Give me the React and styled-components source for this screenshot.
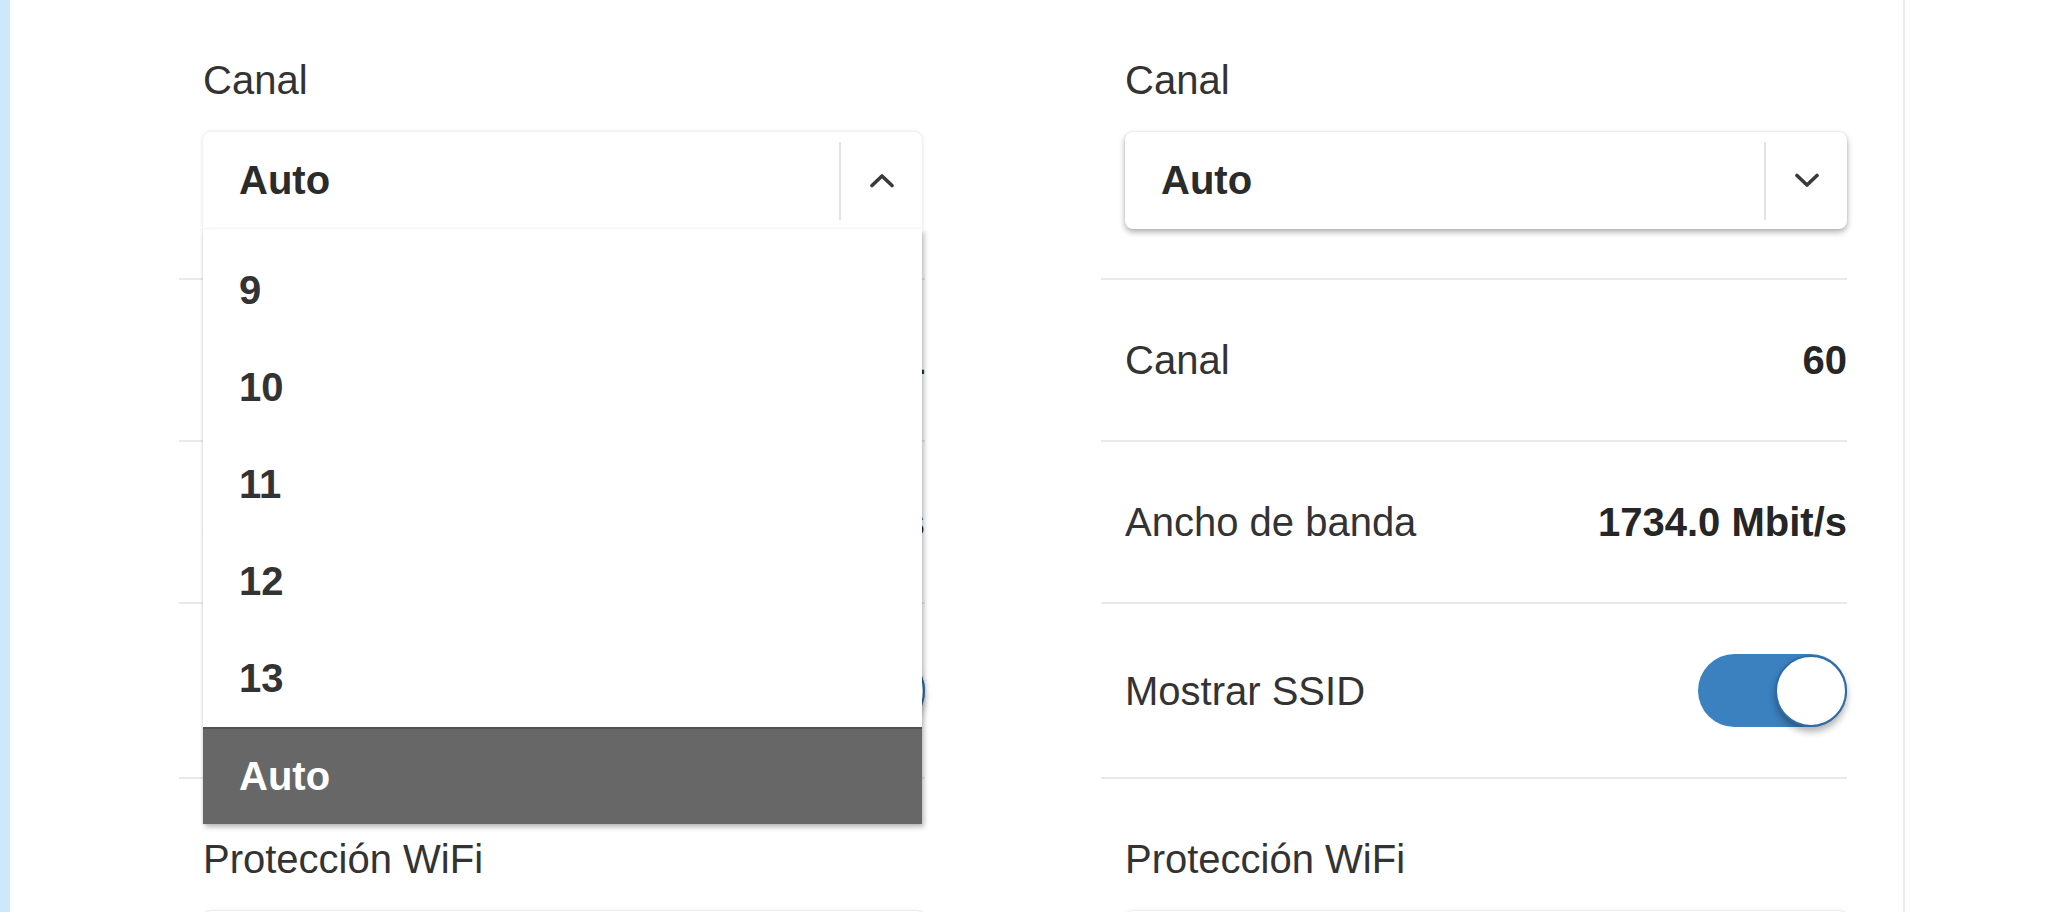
import React from 'react';
import styled, { createGlobalStyle } from 'styled-components';

const GlobalStyle = createGlobalStyle`
    html, body {
        margin: 0;
        padding: 0;
        background: #ffffff;
        font-family: "Liberation Sans", Arial, Helvetica, sans-serif;
        color: #333333;
    }
    * {
        box-sizing: border-box;
    }
`;

const CHANNELS = ['9', '10', '11', '12', '13', 'Auto'];

const BANDS = [
    { open: true, channel: '11', speed: '573.5 Mbit/s' },
    { open: false, channel: '60', speed: '1734.0 Mbit/s' },
];

function Chevron({ up }) {
    return (
        <svg width="26" height="15" viewBox="0 0 26 15">
            <polyline
                points={up ? '3,12.5 13,3 23,12.5' : '3,2.5 13,12 23,2.5'}
                fill="none"
                stroke="#3a3a3a"
                strokeWidth="3.6"
                strokeLinecap="round"
                strokeLinejoin="round"
            />
        </svg>
    );
}

function Dropdown({ value, open, options }) {
    return (
        <DropWrap $open={open}>
            <SelectBox $open={open}>
                <SelectValue>{value}</SelectValue>
                <Arrow>
                    <Chevron up={open} />
                </Arrow>
            </SelectBox>
            {open && (
                <Menu>
                    {options.map(o => (
                        <Option key={o} $active={o === value}>{o}</Option>
                    ))}
                </Menu>
            )}
        </DropWrap>
    );
}

function Band({ open, channel, speed }) {
    return (
        <Column>
            <Group>
                <Label>Canal</Label>
                <Dropdown value="Auto" open={open} options={CHANNELS} />
            </Group>
            <Row>
                <Label>Canal</Label>
                <Value>{channel}</Value>
            </Row>
            <Row>
                <Label>Ancho de banda</Label>
                <Value>{speed}</Value>
            </Row>
            <Row>
                <Label>Mostrar SSID</Label>
                <Toggle>
                    <Knob />
                </Toggle>
            </Row>
            <Group $divided>
                <Label>Protección WiFi</Label>
                <Dropdown value="WPA2-PSK" options={[]} />
            </Group>
        </Column>
    );
}

function App() {
    return (
        <Page>
            <GlobalStyle />
            <Strip />
            <Panel>
                {BANDS.map((b, i) => (
                    <Band key={i} {...b} />
                ))}
            </Panel>
            <Rest />
        </Page>
    );
}

const Page = styled.div`
    display: flex;
    height: 912px;
    overflow: hidden;
    background: #ffffff;
`;

const Strip = styled.div`
    width: 10px;
    flex-shrink: 0;
    background: #cde7fb;
`;

const Panel = styled.div`
    width: 1895px;
    flex-shrink: 0;
    display: grid;
    grid-template-columns: 746px 746px;
    column-gap: 176px;
    align-content: start;
    padding: 0 56px 0 169px;
    border-right: 2px solid #ededed;
`;

const Rest = styled.div`
    flex: 1;
    background: #ffffff;
`;

const Column = styled.div`
    display: flex;
    flex-direction: column;
`;

const Group = styled.div`
    padding: 50px 0 49px 24px;
    border-top: ${p => (p.$divided ? '2px solid #e9e9e9' : 'none')};
`;

const Label = styled.div`
    font-size: 40px;
    line-height: 60px;
    color: #333333;
    margin-bottom: 22px;
`;

const Row = styled.div`
    display: flex;
    align-items: center;
    justify-content: space-between;
    padding: 50px 0 50px 24px;
    border-top: 2px solid #e9e9e9;

    & > ${Label} {
        margin-bottom: 0;
    }
`;

const Value = styled.div`
    font-size: 40px;
    line-height: 60px;
    font-weight: 700;
    color: #262626;
`;

const DropWrap = styled.div`
    position: relative;
    margin-right: ${p => (p.$open ? '3px' : '0')};
`;

const SelectBox = styled.div`
    display: flex;
    align-items: center;
    height: 97px;
    background: #ffffff;
    border-radius: ${p => (p.$open ? '8px 8px 0 0' : '8px')};
    box-shadow: ${p =>
        p.$open
            ? '0 0 4px rgba(0, 0, 0, 0.14)'
            : '0 3px 6px rgba(0, 0, 0, 0.32), 0 0 2px rgba(0, 0, 0, 0.1)'};
`;

const SelectValue = styled.div`
    flex: 1;
    padding-left: 36px;
    font-size: 40px;
    font-weight: 700;
    color: #2b2b2b;
`;

const Arrow = styled.div`
    width: 83px;
    height: 78px;
    display: flex;
    align-items: center;
    justify-content: center;
    border-left: 2px solid #e2e2e2;
`;

const Menu = styled.div`
    position: absolute;
    top: 100%;
    left: 0;
    right: 0;
    z-index: 5;
    padding-top: 13px;
    background: #ffffff;
    box-shadow: 2px 3px 5px rgba(0, 0, 0, 0.28), -1px 0 2px rgba(0, 0, 0, 0.08);
`;

const Option = styled.div`
    height: 97px;
    display: flex;
    align-items: center;
    padding-left: 36px;
    font-size: 40px;
    font-weight: 700;
    color: ${p => (p.$active ? '#ffffff' : '#333333')};
    background: ${p => (p.$active ? '#676767' : '#ffffff')};
    border-top: ${p => (p.$active ? '2px solid #505050' : 'none')};
`;

const Toggle = styled.div`
    position: relative;
    width: 149px;
    height: 73px;
    border-radius: 37px;
    background: #3b80bf;
`;

const Knob = styled.div`
    position: absolute;
    top: 1px;
    right: 0;
    width: 72px;
    height: 72px;
    border-radius: 50%;
    background: #ffffff;
    border: 2px solid #2f6ba6;
    box-shadow: 0 5px 7px rgba(0, 0, 0, 0.3);
`;

export default App;
